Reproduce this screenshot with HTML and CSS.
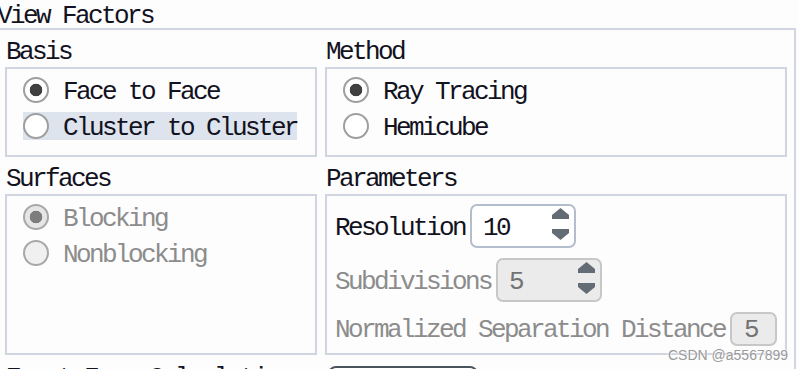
FILE: index.html
```html
<!DOCTYPE html>
<html lang="en">

<head>
  <meta charset="UTF-8">
  <meta name="viewport" content="width=device-width, initial-scale=1.0">
  <title>View Factors</title>
  <link rel="stylesheet" href="styles.css">
</head>

<body>
  <h1 class="title">View Factors</h1>

  <section class="panel">
    <div class="groups">
      <div class="group">
        <h2>Basis</h2>
        <div class="box">
          <label class="option">
            <input type="radio" name="basis" checked>
            <span>Face to Face</span>
          </label>
          <label class="option selected">
            <input type="radio" name="basis">
            <span>Cluster to Cluster</span>
          </label>
        </div>
      </div>

      <div class="group">
        <h2>Method</h2>
        <div class="box">
          <label class="option">
            <input type="radio" name="method" checked>
            <span>Ray Tracing</span>
          </label>
          <label class="option">
            <input type="radio" name="method">
            <span>Hemicube</span>
          </label>
        </div>
      </div>

      <div class="group">
        <h2>Surfaces</h2>
        <div class="box">
          <label class="option disabled">
            <input type="radio" name="surfaces" checked disabled>
            <span>Blocking</span>
          </label>
          <label class="option disabled">
            <input type="radio" name="surfaces" disabled>
            <span>Nonblocking</span>
          </label>
        </div>
      </div>

      <div class="group">
        <h2>Parameters</h2>
        <div class="box params">
          <div class="field">
            <label for="resolution">Resolution</label>
            <div class="num">
              <input id="resolution" type="text" value="10">
              <svg class="spin" viewBox="0 0 17 32" width="17" height="32">
                <path d="M8.5 0 L17 7 L17 11 L0 11 L0 7 Z"></path>
                <path d="M0 21 L17 21 L17 25 L8.5 32 L0 25 Z"></path>
              </svg>
            </div>
          </div>

          <div class="field disabled">
            <label for="subdivisions">Subdivisions</label>
            <div class="num">
              <input id="subdivisions" type="text" value="5" disabled>
              <svg class="spin" viewBox="0 0 17 32" width="17" height="32">
                <path d="M8.5 0 L17 7 L17 11 L0 11 L0 7 Z"></path>
                <path d="M0 21 L17 21 L17 25 L8.5 32 L0 25 Z"></path>
              </svg>
            </div>
          </div>

          <div class="field disabled">
            <label for="distance">Normalized Separation Distance</label>
            <div class="num small">
              <input id="distance" type="text" value="5" disabled>
            </div>
          </div>
        </div>
      </div>
    </div>

    <div class="footer">
      <span>Exact Face Calculation</span>
      <button type="button">Compute</button>
    </div>
  </section>

  <div class="watermark">CSDN @a5567899</div>
</body>

</html>
```

FILE: styles.css
```css
:root {
  --ink: hsl(240deg 30% 10%);
  --muted: hsl(0deg 0% 55%);
  --line: hsl(222deg 22% 85%);
  --field-line: hsl(215deg 18% 75%);
  --selected: hsl(215deg 30% 90%);
  --page: hsl(240deg 20% 99.4%);
}

body {
  margin: 0;
  block-size: 369px;
  overflow: hidden;
  font-family: "Liberation Mono", "Noto Sans Mono CJK SC", monospace;
  font-size: 26px;
  line-height: 28px;
  letter-spacing: -2.6px;
  color: var(--ink);
  background: var(--page);
}

h1,
h2 {
  margin: 0;
  font: inherit;
  white-space: nowrap;
}

.title {
  padding-block-start: 2px;
  block-size: 26px;
  margin-inline-start: -3px;
}

.panel {
  inline-size: 796px;
  box-sizing: border-box;
  border-block-start: 2px solid var(--line);
  border-inline-end: 2px solid var(--line);
  padding: 0 7px 0 5px;
}

.groups {
  display: grid;
  grid-template-columns: 312px 462px;
  column-gap: 8px;
}

.group {
  display: flex;
  flex-direction: column;
}

.group h2 {
  padding: 8px 0 1px 1px;
}

.box {
  flex: 1;
  border: 2px solid var(--line);
  padding: 7px 16px 15px;
}

.option {
  display: flex;
  align-items: center;
  gap: 14px;
  inline-size: fit-content;
  block-size: 28px;
  margin-block-end: 8px;
  white-space: nowrap;
}

.option span {
  padding-block-start: 4px;
}

.option:last-child {
  margin-block-end: 0;
}

.option.selected {
  background: var(--selected);
}

.option input {
  appearance: none;
  flex: none;
  margin: 0;
  inline-size: 26px;
  block-size: 26px;
  border: 2px solid hsl(0deg 0% 62%);
  border-radius: 50%;
  background: #fff;
}

.option input:checked {
  background: radial-gradient(circle, hsl(0deg 0% 25%) 0 6px, #fff 6.6px);
}

.option.disabled {
  color: var(--muted);
}

.option.disabled input {
  border-color: hsl(0deg 0% 66%);
  background: hsl(0deg 0% 94%);
}

.option.disabled input:checked {
  background: radial-gradient(circle, hsl(0deg 0% 49%) 0 6px, hsl(0deg 0% 90%) 6.6px);
}

.params {
  padding: 8px 8px 7px;
  display: flex;
  flex-direction: column;
  gap: 10px;
}

.field {
  display: flex;
  align-items: baseline;
  gap: 5px;
}

.field label {
  white-space: nowrap;
}

.field.disabled {
  color: var(--muted);
}

.num {
  display: inline-flex;
  flex: none;
  inline-size: 106px;
  block-size: 44px;
  box-sizing: border-box;
  border: 2px solid var(--field-line);
  border-radius: 7px;
  background: #fff;
}

.num input {
  flex: 1;
  min-inline-size: 0;
  border: none;
  outline: none;
  background: transparent;
  font: inherit;
  letter-spacing: inherit;
  color: var(--ink);
  padding: 8px 0 4px 11px;
}

.spin {
  flex: none;
  margin: 2px 5px 0 0;
  fill: hsl(210deg 8% 42%);
}

.field.disabled .num {
  background: hsl(0deg 0% 92%);
  border-color: hsl(0deg 0% 78%);
}

.field.disabled .num input {
  color: hsl(0deg 0% 45%);
}

.num.small {
  inline-size: 47px;
  block-size: 34px;
}

.num.small input {
  padding: 2px 0 0 12px;
}

.footer {
  display: grid;
  grid-template-columns: 312px 462px;
  column-gap: 8px;
  margin-block-start: 11px;
  align-items: start;
}

.footer span {
  margin-block-start: -2px;
  padding-inline-start: 1px;
  white-space: nowrap;
}

.footer button {
  margin-inline-start: 3px;
  inline-size: 150px;
  block-size: 40px;
  border: 2px solid hsl(210deg 12% 33%);
  border-radius: 8px;
  background: #fff;
  font: inherit;
  letter-spacing: inherit;
  color: var(--ink);
}

.watermark {
  position: absolute;
  left: 668px;
  top: 347px;
  font-family: "Liberation Sans", Arial, sans-serif;
  font-size: 14px;
  line-height: 16px;
  letter-spacing: 0;
  color: hsl(0deg 0% 60%);
  text-shadow: 0 0 2px #fff, 0 0 2px #fff;
}
```
